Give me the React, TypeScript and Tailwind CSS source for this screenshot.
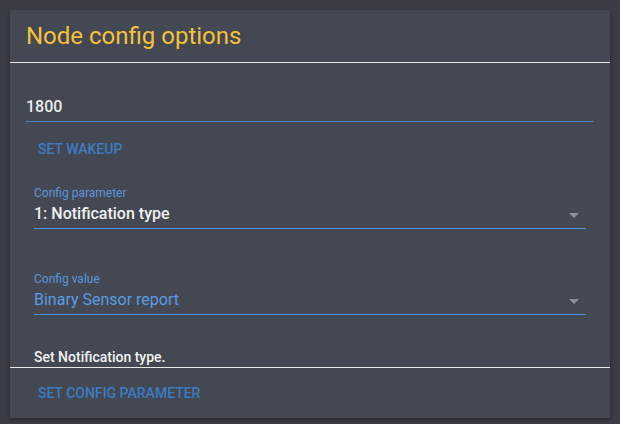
import React from "react";

function Arrow() {
  return (
    <svg width="10" height="5" viewBox="0 0 10 5" className="absolute right-[7px] top-[9px]">
      <path d="M0 0 L10 0 L5 5 Z" fill="#8b8f97" />
    </svg>
  );
}

function SelectField({ label, value, valueClass }: { label: string; value: string; valueClass: string }) {
  return (
    <div className="mx-[24px] flex flex-col">
      <div className="h-[16px] text-[12px] leading-[16px] text-[#5a96dc]">{label}</div>
      <div className="relative mt-[3px] border-b border-[#4a8fe0] pb-[4px]">
        <div className={"h-[20px] text-[16px] leading-[20px] " + valueClass}>{value}</div>
        <Arrow />
      </div>
    </div>
  );
}

export default function App() {
  return (
    <div className="h-[424px] w-[620px] bg-[#3a3d45] pt-[10px] pl-[10px]" style={{ fontFamily: "Roboto, 'Liberation Sans', sans-serif" }}>
      <div className="flex h-[408px] w-[600px] flex-col rounded-[2px] bg-[#434853] shadow-[0_2px_4px_rgba(0,0,0,0.35)]">
        <div className="flex h-[53px] items-center border-b border-[#e8e8e8] pl-[16px] pb-[1px]">
          <span className="text-[24px] leading-[28px] text-[#f5c13b]">Node config options</span>
        </div>
        <div className="mx-[16px] mt-[34px] border-b border-[#4c82c4] pb-[4px]">
          <div className="h-[20px] text-[16px] font-medium leading-[20px] text-[#ececec]">1800</div>
        </div>
        <div className="mt-[9px] flex h-[36px] items-center pl-[28px]">
          <span className="text-[14px] font-medium uppercase leading-[20px] text-[#3d7bc2]">Set wakeup</span>
        </div>
        <div className="mt-[18px]">
          <SelectField label="Config parameter" value="1: Notification type" valueClass="font-medium text-[#f0f0f0]" />
        </div>
        <div className="mt-[42px]">
          <SelectField label="Config value" value="Binary Sensor report" valueClass="text-[#5a9be4]" />
        </div>
        <div className="mt-[32px] border-b border-[#e8e8e8] pl-[24px]">
          <div className="h-[20px] text-[14px] font-medium leading-[20px] text-[#f2f2f2]">Set Notification type.</div>
        </div>
        <div className="mt-[7px] flex h-[36px] items-center pl-[28px]">
          <span className="text-[14px] font-medium uppercase leading-[20px] text-[#3d7bc2]">Set config parameter</span>
        </div>
      </div>
    </div>
  );
}
